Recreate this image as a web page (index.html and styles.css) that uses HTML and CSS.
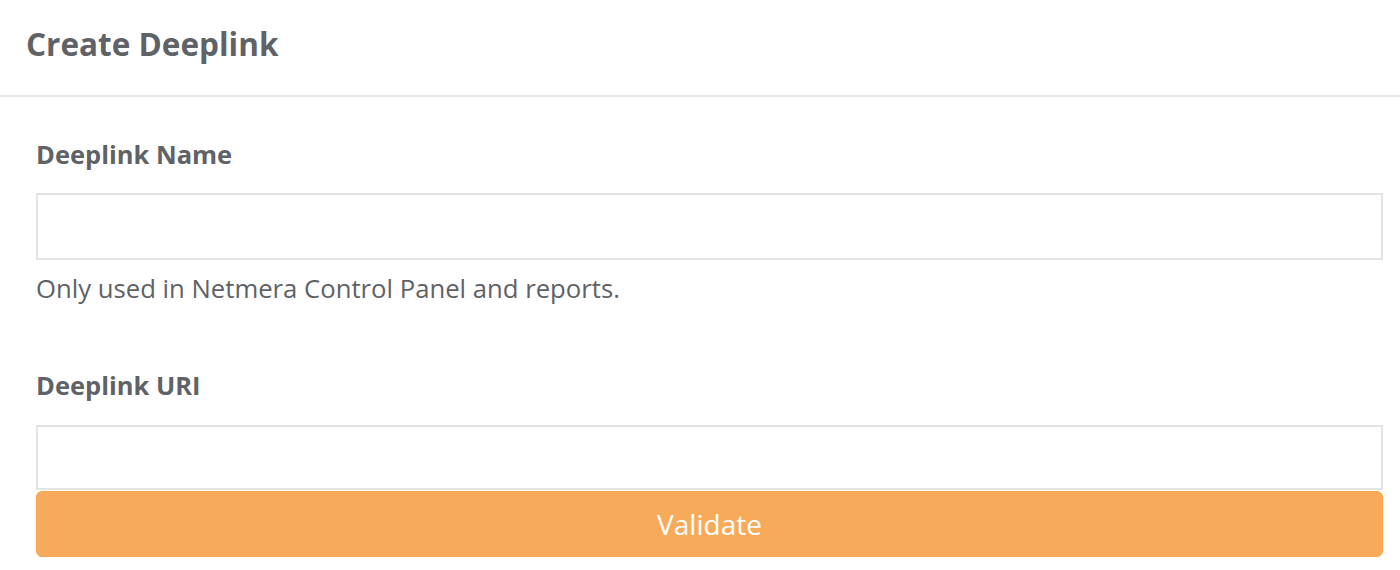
FILE: index.html
```html
<!DOCTYPE html>
<html>
<head>
<meta charset="utf-8">
<link rel="stylesheet" href="styles.css">
</head>
<body>
<div class="page">
  <header class="head">
    <h1 class="title">Create Deeplink</h1>
  </header>
  <main class="form">
    <section class="field">
      <label class="label">Deeplink Name</label>
      <div class="input"></div>
      <p class="help">Only used in Netmera Control Panel and reports.</p>
    </section>
    <section class="field field-uri">
      <label class="label">Deeplink URI</label>
      <div class="input input-uri"></div>
      <button class="btn">Validate</button>
    </section>
  </main>
</div>
</body>
</html>
```

FILE: styles.css
```css
html, body {
  margin: 0;
  padding: 0;
  background: #ffffff;
}
body {
  font-family: "Open Sans", "Liberation Sans", sans-serif;
  color: #5f6266;
}
.page {
  width: 1400px;
  height: 570px;
  overflow: hidden;
}
.head {
  height: 97px;
  border-bottom: 2px solid #e2e5e9;
  padding: 24px 0 0 26px;
  box-sizing: border-box;
}
.title {
  margin: 0;
  font-size: 31.5px;
  font-weight: 700;
  color: #5f6266;
  line-height: 40px;
}
.form {
  padding: 0 17px 0 36px;
}
.field {
  display: flex;
  flex-direction: column;
}
.label {
  margin-top: 42px;
  font-size: 25.5px;
  font-weight: 700;
  line-height: 30px;
  color: #5f6266;
}
.input {
  margin-top: 24px;
  height: 67px;
  box-sizing: border-box;
  border: 2px solid #e4e4e4;
  background: #fff;
}
.help {
  margin: 14px 0 0;
  font-size: 25.7px;
  line-height: 30px;
  color: #606266;
}
.field-uri .label {
  margin-top: 66px;
}
.input-uri {
  margin-top: 25px;
  height: 65px;
}
.btn {
  margin-top: 1px;
  height: 66px;
  border: 1px solid #f5a54f;
  border-radius: 6px;
  background: #f7ab5a;
  color: #ffffff;
  font-family: "Open Sans", "Liberation Sans", sans-serif;
  font-size: 28px;
  line-height: 1;
  padding: 0;
}
```
